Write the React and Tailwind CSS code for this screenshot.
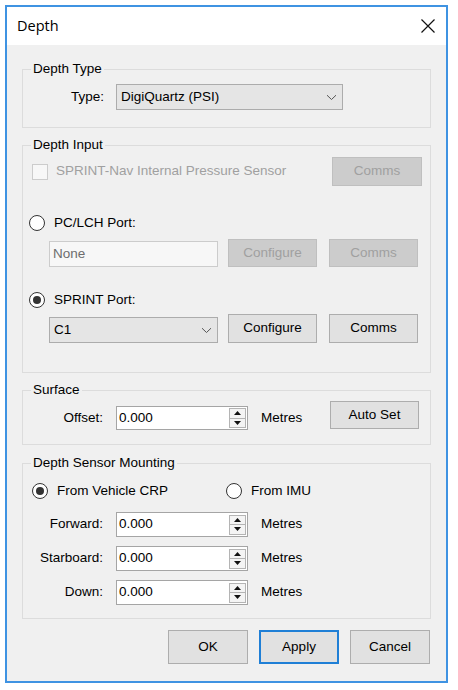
import React from "react";

function Btn({ children, disabled, className = "" }) {
  return (
    <div
      className={`flex items-center justify-center border ${
        disabled
          ? "border-[#bfbfbf] bg-[#cccccc] text-[#a0a0a0]"
          : "border-[#adadad] bg-[#e1e1e1] text-black"
      } ${className}`}
    >
      {children}
    </div>
  );
}

function Radio({ checked }) {
  return (
    <span className="flex h-[16px] w-[16px] shrink-0 items-center justify-center rounded-full border border-[#333333] bg-white">
      {checked && <span className="h-[8px] w-[8px] rounded-full bg-[#333333]" />}
    </span>
  );
}

function Chevron() {
  return (
    <svg width="11" height="7" viewBox="0 0 11 7" className="shrink-0">
      <path d="M1 1.2 L5.5 5.5 L10 1.2" fill="none" stroke="#555" strokeWidth="1" />
    </svg>
  );
}

function Combo({ value, className = "" }) {
  return (
    <div className={`flex items-center border border-[#acacac] bg-[#e5e5e5] pl-[4px] pr-[5px] ${className}`}>
      <span className="flex-1">{value}</span>
      <Chevron />
    </div>
  );
}

function Spin({ value, className = "" }) {
  return (
    <div className={`flex w-[132px] items-center border border-[#a5a5a5] bg-white pl-[2px] pr-[1px] ${className}`}>
      <span className="flex-1">{value}</span>
      <div className="flex h-[20px] w-[17px] flex-col border border-[#b4b4b4] bg-[#f4f4f4]">
        <div className="flex flex-1 items-center justify-center border-b border-[#b4b4b4]">
          <svg width="7" height="4" viewBox="0 0 7 4">
            <path d="M0 4 L3.5 0 L7 4 Z" fill="#111" />
          </svg>
        </div>
        <div className="flex flex-1 items-center justify-center">
          <svg width="7" height="4" viewBox="0 0 7 4">
            <path d="M0 0 L3.5 4 L7 0 Z" fill="#111" />
          </svg>
        </div>
      </div>
    </div>
  );
}

function Group({ title, className = "", children }) {
  return (
    <fieldset className={`mx-[15px] border border-[#dcdcdc] ${className}`}>
      <legend className="ml-[8px] px-[2px] leading-[16px]">{title}</legend>
      {children}
    </fieldset>
  );
}

export default function App() {
  return (
    <div className="h-[690px] w-[458px] bg-white pl-[5px] pt-[5px] font-['Liberation_Sans',Arial,sans-serif] text-[13.5px] text-black">
      <div className="flex h-[678px] w-[443px] flex-col border-2 border-[#3f93e2]">
        {/* title bar */}
        <div className="flex h-[38px] items-center justify-between bg-white pl-[10px] pr-[11px]">
          <span className="font-['Open_Sans',sans-serif] text-[14.5px]">Depth</span>
          <svg width="14" height="14" viewBox="0 0 14 14">
            <path d="M0.5 0.5 L13.5 13.5 M13.5 0.5 L0.5 13.5" stroke="#111" strokeWidth="1.2" />
          </svg>
        </div>

        <div className="flex-1 bg-[#f0f0f0] pt-[16px]">
          <Group title="Depth Type" className="pb-[17px]">
            <div className="mt-[7px] flex items-center">
              <span className="w-[81px] text-right">Type:</span>
              <Combo value="DigiQuartz (PSI)" className="ml-[12px] h-[26px] w-[227px]" />
            </div>
          </Group>

          <Group title="Depth Input" className="mt-[9px] pb-[29px]">
            <div className="mt-[4px] flex items-center">
              <span className="ml-[9px] h-[16px] w-[16px] border border-[#cccccc] bg-[#f7f7f7]" />
              <span className="ml-[8px] text-[#a0a0a0]">SPRINT-Nav Internal Pressure Sensor</span>
              <Btn disabled className="ml-auto mr-[8px] h-[29px] w-[90px]">Comms</Btn>
            </div>
            <div className="mt-[29px] flex h-[16px] items-center">
              <span className="ml-[6px]"><Radio /></span>
              <span className="ml-[9px]">PC/LCH Port:</span>
            </div>
            <div className="mt-[8px] flex items-end">
              <div className="ml-[26px] flex h-[26px] w-[169px] items-center border border-[#cccccc] bg-[#f7f7f7] pl-[3px] text-[#6d6d6d]">
                None
              </div>
              <Btn disabled className="ml-[10px] h-[28px] w-[89px]">Configure</Btn>
              <Btn disabled className="ml-[12px] h-[28px] w-[89px]">Comms</Btn>
            </div>
            <div className="mt-[25px] flex h-[16px] items-center">
              <span className="ml-[6px]"><Radio checked /></span>
              <span className="ml-[9px]">SPRINT Port:</span>
            </div>
            <div className="mt-[6px] flex items-end">
              <Combo value="C1" className="ml-[26px] h-[26px] w-[169px]" />
              <Btn className="ml-[10px] h-[29px] w-[89px]">Configure</Btn>
              <Btn className="ml-[12px] h-[29px] w-[89px]">Comms</Btn>
            </div>
          </Group>

          <Group title="Surface" className="mt-[9px] pb-[14px]">
            <div className="mt-[3px] flex items-end">
              <span className="flex h-[24px] w-[80px] items-center justify-end">Offset:</span>
              <Spin value="0.000" className="ml-[13px] h-[24px]" />
              <span className="ml-[13px] flex h-[24px] items-center">Metres</span>
              <Btn className="mb-[1px] ml-auto mr-[11px] h-[28px] w-[89px]">Auto Set</Btn>
            </div>
          </Group>

          <Group title="Depth Sensor Mounting" className="mt-[10px] pb-[13px]">
            <div className="mt-[12px] flex h-[16px] items-center">
              <div className="ml-[9px] flex w-[194px] items-center">
                <Radio checked />
                <span className="ml-[9px]">From Vehicle CRP</span>
              </div>
              <Radio />
              <span className="ml-[9px]">From IMU</span>
            </div>
            {[
              ["Forward:", "mt-[13px]"],
              ["Starboard:", "mt-[9px]"],
              ["Down:", "mt-[9px]"],
            ].map(([label, mt]) => (
              <div key={label} className={`${mt} flex items-center`}>
                <span className="w-[80px] text-right">{label}</span>
                <Spin value="0.000" className="ml-[13px] h-[25px]" />
                <span className="ml-[13px]">Metres</span>
              </div>
            ))}
          </Group>

          <div className="mr-[16px] mt-[11px] flex justify-end gap-[11px]">
            <Btn className="h-[34px] w-[80px]">OK</Btn>
            <Btn className="h-[34px] w-[80px] !border-2 !border-[#1f7fd6]">Apply</Btn>
            <Btn className="h-[34px] w-[80px]">Cancel</Btn>
          </div>
        </div>
      </div>
    </div>
  );
}
